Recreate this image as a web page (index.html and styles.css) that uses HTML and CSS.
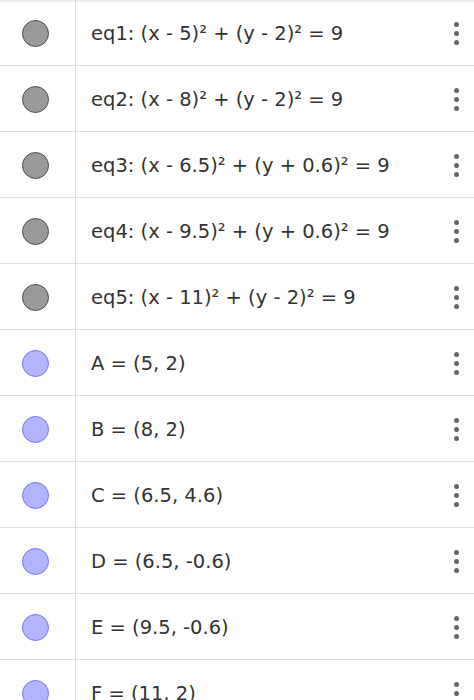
FILE: index.html
```html
<!DOCTYPE html>
<html lang="en">
<head>
    <meta charset="UTF-8">
    <meta name="viewport" content="width=device-width, initial-scale=1.0">
    <title>Algebra</title>
    <link rel="stylesheet" href="styles.css">
</head>
<body>
    <div class="algebra-list">
        <div class="item">
            <div class="marble-cell"><span class="marble marble-gray"></span></div>
            <div class="item-text">eq1: (x - 5)² + (y - 2)² = 9</div>
            <div class="menu-dots"><span></span><span></span><span></span></div>
        </div>
        <div class="item">
            <div class="marble-cell"><span class="marble marble-gray"></span></div>
            <div class="item-text">eq2: (x - 8)² + (y - 2)² = 9</div>
            <div class="menu-dots"><span></span><span></span><span></span></div>
        </div>
        <div class="item">
            <div class="marble-cell"><span class="marble marble-gray"></span></div>
            <div class="item-text">eq3: (x - 6.5)² + (y + 0.6)² = 9</div>
            <div class="menu-dots"><span></span><span></span><span></span></div>
        </div>
        <div class="item">
            <div class="marble-cell"><span class="marble marble-gray"></span></div>
            <div class="item-text">eq4: (x - 9.5)² + (y + 0.6)² = 9</div>
            <div class="menu-dots"><span></span><span></span><span></span></div>
        </div>
        <div class="item">
            <div class="marble-cell"><span class="marble marble-gray"></span></div>
            <div class="item-text">eq5: (x - 11)² + (y - 2)² = 9</div>
            <div class="menu-dots"><span></span><span></span><span></span></div>
        </div>
        <div class="item">
            <div class="marble-cell"><span class="marble marble-blue"></span></div>
            <div class="item-text">A = (5, 2)</div>
            <div class="menu-dots"><span></span><span></span><span></span></div>
        </div>
        <div class="item">
            <div class="marble-cell"><span class="marble marble-blue"></span></div>
            <div class="item-text">B = (8, 2)</div>
            <div class="menu-dots"><span></span><span></span><span></span></div>
        </div>
        <div class="item">
            <div class="marble-cell"><span class="marble marble-blue"></span></div>
            <div class="item-text">C = (6.5, 4.6)</div>
            <div class="menu-dots"><span></span><span></span><span></span></div>
        </div>
        <div class="item">
            <div class="marble-cell"><span class="marble marble-blue"></span></div>
            <div class="item-text">D = (6.5, -0.6)</div>
            <div class="menu-dots"><span></span><span></span><span></span></div>
        </div>
        <div class="item">
            <div class="marble-cell"><span class="marble marble-blue"></span></div>
            <div class="item-text">E = (9.5, -0.6)</div>
            <div class="menu-dots"><span></span><span></span><span></span></div>
        </div>
        <div class="item">
            <div class="marble-cell"><span class="marble marble-blue"></span></div>
            <div class="item-text">F = (11, 2)</div>
            <div class="menu-dots"><span></span><span></span><span></span></div>
        </div>
    </div>
</body>
</html>
```

FILE: styles.css
```css
body {
    margin: 0;
    padding: 0;
    font-family: "DejaVu Sans", sans-serif;
    color: #333;
    background-color: white;
    overflow: hidden;
}

/* Светлая полоса сверху */
.algebra-list {
    display: flex;
    flex-direction: column;
    box-shadow: inset 0 2px 0 #ececec;
}

.item {
    display: flex;
    align-items: stretch;
    height: 65px;
    border-bottom: 1px solid #e0e0e0;
}

/* Колонка с шариком */
.marble-cell {
    width: 76px;
    flex-shrink: 0;
    display: flex;
    justify-content: center;
    align-items: center;
    border-right: 1px solid #e0e0e0;
    padding-right: 5px;
    padding-top: 2px;
    box-sizing: border-box;
}

.marble {
    width: 25px;
    height: 25px;
    border-radius: 50%;
    border: 1px solid;
}

.marble-gray {
    background-color: #999;
    border-color: #4d4d4d;
}

.marble-blue {
    background-color: #b3b3ff;
    border-color: #7373ff;
}

.item-text {
    flex: 1;
    display: flex;
    align-items: center;
    padding-left: 15px;
    padding-top: 1px;
    font-size: 19.5px;
    white-space: nowrap;
}

/* Меню из трёх точек */
.menu-dots {
    width: 36px;
    display: flex;
    flex-direction: column;
    justify-content: center;
    align-items: center;
    gap: 4px;
    padding-top: 2px;
}

.menu-dots span {
    width: 5px;
    height: 5px;
    border-radius: 50%;
    background-color: #666;
}
```
